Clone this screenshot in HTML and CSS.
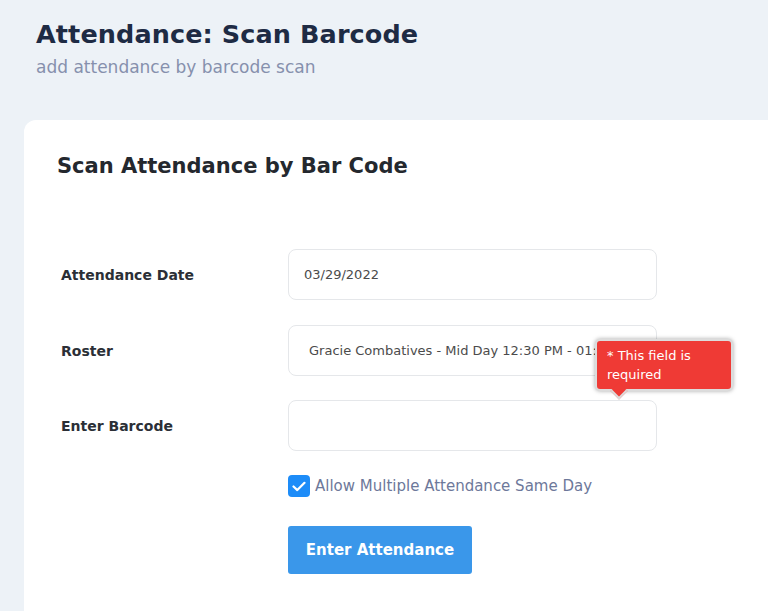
FILE: index.html
```html
<!DOCTYPE html>
<html lang="en">
<head>
    <meta charset="UTF-8">
    <meta name="viewport" content="width=device-width, initial-scale=1.0">
    <title>Attendance: Scan Barcode</title>
    <link rel="stylesheet" href="styles.css">
</head>
<body>
    <div class="page-header">
        <h1>Attendance: Scan Barcode</h1>
        <p class="subtitle">add attendance by barcode scan</p>
    </div>
    <div class="card">
        <h2>Scan Attendance by Bar Code</h2>
        <form class="scan-form">
            <div class="form-row first-row">
                <label class="field-label" for="attDate">Attendance Date</label>
                <div class="field">
                    <input type="text" id="attDate" value="03/29/2022">
                </div>
            </div>
            <div class="form-row">
                <label class="field-label" for="roster">Roster</label>
                <div class="field select-field">
                    <div class="select" id="roster">Gracie Combatives - Mid Day 12:30 PM - 01:30 PM</div>
                    <svg class="chevron" width="10" height="6" viewBox="0 0 10 6"><path d="M1 1l4 4 4-4" fill="none" stroke="#999" stroke-width="1.3"/></svg>
                </div>
            </div>
            <div class="form-row">
                <label class="field-label" for="barcode">Enter Barcode</label>
                <div class="field">
                    <input type="text" id="barcode">
                    <div class="error-tip">* This field is required</div>
                </div>
            </div>
            <div class="form-row">
                <span></span>
                <label class="check">
                    <span class="checkbox">
                        <svg width="14" height="11" viewBox="0 0 14 11"><path d="M1.5 5.5l3.8 3.6L12.5 1.8" fill="none" stroke="#fff" stroke-width="2.2" stroke-linecap="round" stroke-linejoin="round"/></svg>
                    </span>
                    Allow Multiple Attendance Same Day
                </label>
            </div>
            <div class="form-row">
                <span></span>
                <div><button type="button">Enter Attendance</button></div>
            </div>
        </form>
    </div>
</body>
</html>
```

FILE: styles.css
```css
body {
    font-family: "DejaVu Sans", Verdana, sans-serif;
    background-color: #edf2f7;
    margin: 0;
    padding: 0;
    overflow: hidden;
}
.page-header {
    padding: 18px 36px 0;
    height: 120px;
    box-sizing: border-box;
}
h1 {
    margin: 0;
    font-size: 25.5px;
    line-height: 32px;
    font-weight: bold;
    color: #1e2b44;
    letter-spacing: 0.1px;
}
.subtitle {
    margin: 6px 0 0;
    font-size: 17px;
    line-height: 22px;
    color: #8690ad;
}
.card {
    background-color: #fff;
    margin-left: 24px;
    border-radius: 12px 0 0 0;
    padding: 33px 33px 60px;
    min-height: 500px;
}
h2 {
    margin: 0;
    font-size: 21px;
    line-height: 26px;
    color: #24282e;
}
.scan-form {
    margin-top: 70px;
}
.form-row {
    display: grid;
    grid-template-columns: 227px 369px;
    align-items: center;
    margin-left: 4px;
    margin-bottom: 24px;
}
.first-row {
    margin-bottom: 25px;
}
.field-label {
    font-size: 14px;
    font-weight: bold;
    color: #2b2f36;
}
.field {
    position: relative;
}
input, .select {
    width: 100%;
    height: 51px;
    box-sizing: border-box;
    border: 1px solid #e5e7ea;
    border-radius: 8px;
    padding: 0 15px;
    font-family: inherit;
    font-size: 13px;
    color: #4b4b4b;
    outline: none;
}
.select {
    display: flex;
    align-items: center;
    padding-left: 20px;
    white-space: nowrap;
    overflow: hidden;
}
.chevron {
    position: absolute;
    right: 10px;
    top: 19px;
}
.error-tip {
    position: absolute;
    left: 307px;
    top: -61px;
    width: 138px;
    box-sizing: border-box;
    padding: 5px 8px 5px 10px;
    background-color: #ef3a35;
    color: #fff;
    font-size: 13px;
    line-height: 19px;
    border: 2px solid #dcdcdc;
    border-radius: 5px;
    box-shadow: 0 0 4px rgba(0, 0, 0, 0.35);
}
.error-tip::after {
    content: "";
    position: absolute;
    left: 16px;
    bottom: -8px;
    width: 10px;
    height: 10px;
    background-color: #ef3a35;
    border-right: 2px solid #dcdcdc;
    border-bottom: 2px solid #dcdcdc;
    transform: rotate(45deg);
}
.check {
    display: flex;
    align-items: center;
    gap: 5px;
    font-size: 15px;
    color: #6d789a;
}
.checkbox {
    width: 22px;
    height: 22px;
    border-radius: 4px;
    background-color: #1d8cf8;
    display: flex;
    align-items: center;
    justify-content: center;
}
button {
    width: 184px;
    height: 48px;
    margin-top: 5px;
    background-color: #3a97ea;
    color: #fff;
    border: none;
    border-radius: 3px;
    font-family: inherit;
    font-size: 15px;
    font-weight: bold;
    cursor: pointer;
}
```
